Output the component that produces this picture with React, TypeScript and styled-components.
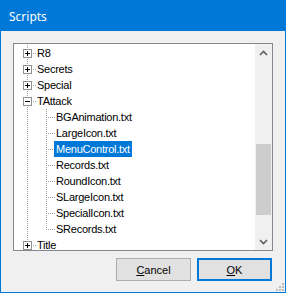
import React, { FC } from "react";
import styled, { createGlobalStyle } from "styled-components";

const GlobalStyle = createGlobalStyle`
    html, body {
        margin: 0;
        padding: 0;
        background: #ffffff;
    }
`;

const Window = styled.div`
    position: relative;
    width: 286px;
    height: 293px;
    box-sizing: border-box;
    border: 1px solid #0078d7;
    background: #f0f0f0;
    display: flex;
    flex-direction: column;
    font-family: "Liberation Sans", Arial, sans-serif;
    font-size: 11px;
    color: #000;
`;

const TitleBar = styled.div`
    flex: none;
    height: 30px;
    background: #0078d7;
    color: #fff;
    display: flex;
    align-items: center;
    padding-left: 8px;
    font-family: "Segoe UI", "Noto Sans", sans-serif;
    font-size: 12px;
`;

const Body = styled.div`
    flex: 1;
    display: flex;
    flex-direction: column;
    gap: 7px;
    padding: 12px 12px 11px 12px;
`;

const TreeBox = styled.div`
    height: 208px;
    box-sizing: border-box;
    border: 1px solid #828790;
    background: #fff;
    display: flex;
    overflow: hidden;
`;

const TreeList = styled.div`
    flex: 1;
    padding: 1px 0 0 4px;
    overflow: hidden;
`;

const Row = styled.div`
    display: flex;
    height: 16px;
    line-height: 16px;
    white-space: nowrap;
`;

const dots = (dir: string) =>
    `repeating-linear-gradient(${dir}, #a0a0a0 0 1px, transparent 1px 2px)`;

const Guide = styled.div<{ $vert: "full" | "top"; $horiz?: boolean }>`
    position: relative;
    flex: none;
    width: 19px;
    height: 16px;

    &::before {
        content: "";
        position: absolute;
        left: 9px;
        top: 0;
        width: 1px;
        height: ${(p) => (p.$vert === "top" ? "9px" : "16px")};
        background: ${dots("to bottom")};
    }

    &::after {
        content: "";
        display: ${(p) => (p.$horiz ? "block" : "none")};
        position: absolute;
        left: 9px;
        top: 8px;
        width: 10px;
        height: 1px;
        background: ${dots("to right")};
    }
`;

const ExpandBox = styled.svg`
    position: absolute;
    left: 5px;
    top: 4px;
    z-index: 1;
`;

const Label = styled.span<{ $selected?: boolean }>`
    margin-left: -2px;
    padding: 0 2px;
    height: 16px;
    letter-spacing: -0.25px;
    background: ${(p) => (p.$selected ? "#0078d7" : "transparent")};
    color: ${(p) => (p.$selected ? "#fff" : "#000")};
    position: relative;
`;

const ScrollBar = styled.div`
    flex: none;
    width: 17px;
    background: #f0f0f0;
    display: flex;
    flex-direction: column;
`;

const ArrowButton = styled.div`
    height: 17px;
    flex: none;
    display: flex;
    align-items: center;
    justify-content: center;
`;

const Track = styled.div`
    flex: 1;
    display: flex;
    flex-direction: column;
    align-items: center;
`;

const Thumb = styled.div<{ $offset: number; $size: number }>`
    width: 15px;
    margin-top: ${(p) => p.$offset}px;
    height: ${(p) => p.$size}px;
    background: #cdcdcd;
`;

const ButtonRow = styled.div`
    display: flex;
    justify-content: flex-end;
    gap: 6px;
    padding-right: 1px;
`;

const Button = styled.button<{ $default?: boolean }>`
    width: 75px;
    height: 23px;
    box-sizing: border-box;
    padding: 0;
    background: #e1e1e1;
    border: 1px solid ${(p) => (p.$default ? "#0078d7" : "#adadad")};
    box-shadow: ${(p) => (p.$default ? "inset 0 0 0 1px #0078d7" : "none")};
    font-family: "Liberation Sans", Arial, sans-serif;
    font-size: 11px;
    color: #000;
`;

const Grip = styled.svg`
    position: absolute;
    right: 1px;
    bottom: 1px;
`;

type Node = {
    label: string;
    depth: 0 | 1;
    box?: "plus" | "minus";
    last?: boolean;
    selected?: boolean;
};

const nodes: Node[] = [
    { label: "R8", depth: 0, box: "plus" },
    { label: "Secrets", depth: 0, box: "plus" },
    { label: "Special", depth: 0, box: "plus" },
    { label: "TAttack", depth: 0, box: "minus" },
    { label: "BGAnimation.txt", depth: 1 },
    { label: "LargeIcon.txt", depth: 1 },
    { label: "MenuControl.txt", depth: 1, selected: true },
    { label: "Records.txt", depth: 1 },
    { label: "RoundIcon.txt", depth: 1 },
    { label: "SLargeIcon.txt", depth: 1 },
    { label: "SpecialIcon.txt", depth: 1 },
    { label: "SRecords.txt", depth: 1, last: true },
    { label: "Title", depth: 0, box: "plus" },
];

const Expander: FC<{ kind: "plus" | "minus" }> = ({ kind }) => (
    <ExpandBox width="9" height="9" viewBox="0 0 9 9">
        <rect x="0.5" y="0.5" width="8" height="8" fill="#fff" stroke="#919191" />
        <rect x="2" y="4" width="5" height="1" fill="#000" />
        {kind === "plus" && <rect x="4" y="2" width="1" height="5" fill="#000" />}
    </ExpandBox>
);

const TreeRow: FC<{ node: Node }> = ({ node }) => (
    <Row>
        {node.depth === 0 ? (
            <Guide $vert="full" $horiz>
                {node.box && <Expander kind={node.box} />}
            </Guide>
        ) : (
            <>
                <Guide $vert="full" />
                <Guide $vert={node.last ? "top" : "full"} $horiz />
            </>
        )}
        <Label $selected={node.selected}>{node.label}</Label>
    </Row>
);

const Chevron: FC<{ up?: boolean }> = ({ up }) => (
    <svg width="9" height="6" viewBox="0 0 9 6">
        <polyline
            points={up ? "1,5 4.5,1.5 8,5" : "1,1 4.5,4.5 8,1"}
            fill="none"
            stroke="#606060"
            strokeWidth="1.6"
        />
    </svg>
);

const App: FC = () => {
    return (
        <>
            <GlobalStyle />
            <Window>
                <TitleBar>Scripts</TitleBar>
                <Body>
                    <TreeBox>
                        <TreeList>
                            {nodes.map((n) => (
                                <TreeRow key={n.label} node={n} />
                            ))}
                        </TreeList>
                        <ScrollBar>
                            <ArrowButton>
                                <Chevron up />
                            </ArrowButton>
                            <Track>
                                <Thumb $offset={83} $size={71} />
                            </Track>
                            <ArrowButton>
                                <Chevron />
                            </ArrowButton>
                        </ScrollBar>
                    </TreeBox>
                    <ButtonRow>
                        <Button>
                            <u>C</u>ancel
                        </Button>
                        <Button $default>
                            <u>O</u>K
                        </Button>
                    </ButtonRow>
                </Body>
                <Grip width="10" height="10" viewBox="0 0 10 10">
                    <rect x="8" y="8" width="2" height="2" fill="#bcbcbc" />
                    <rect x="5" y="8" width="2" height="2" fill="#bcbcbc" />
                    <rect x="2" y="8" width="2" height="2" fill="#bcbcbc" />
                    <rect x="8" y="5" width="2" height="2" fill="#bcbcbc" />
                    <rect x="5" y="5" width="2" height="2" fill="#bcbcbc" />
                    <rect x="8" y="2" width="2" height="2" fill="#bcbcbc" />
                </Grip>
            </Window>
        </>
    );
};

export default App;
